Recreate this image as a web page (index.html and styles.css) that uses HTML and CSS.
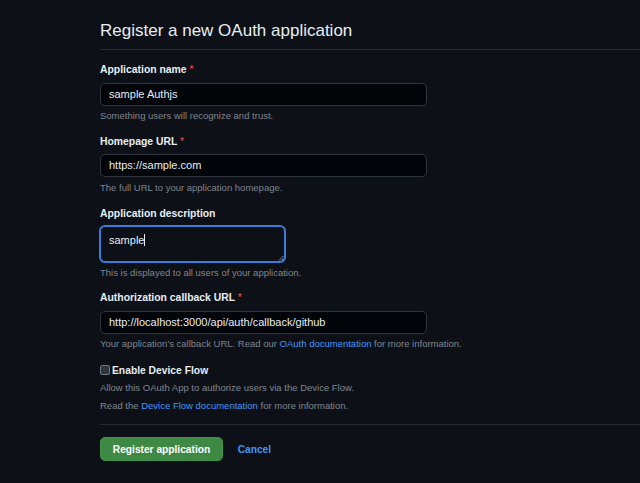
FILE: index.html
```html
<!DOCTYPE html>
<html lang="en">
<head>
<meta charset="utf-8">
<title>Register a new OAuth application</title>
<link rel="stylesheet" href="styles.css">
</head>
<body>
<main class="page">
  <h2 class="title">Register a new OAuth application</h2>
  <form class="form">
    <div class="group">
      <label class="label">Application name <span class="req">*</span></label>
      <div class="input">sample Authjs</div>
      <p class="hint">Something users will recognize and trust.</p>
    </div>
    <div class="group">
      <label class="label">Homepage URL <span class="req">*</span></label>
      <div class="input">https://sample.com</div>
      <p class="hint">The full URL to your application homepage.</p>
    </div>
    <div class="group">
      <label class="label">Application description</label>
      <div class="textarea"><span>sample</span><span class="caret"></span>
        <svg class="grip" width="6" height="6" viewBox="0 0 6 6"><path d="M5.5 1 L1 5.5 M5.5 3.5 L3.5 5.5" stroke="#8b949e" stroke-width="0.9" fill="none"/></svg>
      </div>
      <p class="hint">This is displayed to all users of your application.</p>
    </div>
    <div class="group">
      <label class="label">Authorization callback URL <span class="req">*</span></label>
      <div class="input">http://localhost:3000/api/auth/callback/github</div>
      <p class="hint">Your application’s callback URL. Read our <a class="link">OAuth documentation</a> for more information.</p>
    </div>
    <div class="device">
      <label class="check-row"><span class="checkbox"></span><span class="check-label">Enable Device Flow</span></label>
      <p class="hint">Allow this OAuth App to authorize users via the Device Flow.</p>
      <p class="hint">Read the <a class="link">Device Flow documentation</a> for more information.</p>
    </div>
    <div class="actions">
      <button type="button" class="btn">Register application</button>
      <a class="cancel">Cancel</a>
    </div>
  </form>
</main>
</body>
</html>
```
FILE: styles.css
```css
* { box-sizing: border-box; }
html, body { margin: 0; padding: 0; }
body {
  background: #0d1117;
  color: #e6edf3;
  font-family: "Liberation Sans", Arial, sans-serif;
  width: 640px;
  height: 483px;
  overflow: hidden;
}
.page {
  padding: 0 0 0 100px;
}
.title {
  margin: 0;
  padding: 18.8px 0 6.2px;
  height: 50px;
  font-size: 17px;
  font-weight: 400;
  line-height: 24px;
  color: #e6edf3;
  border-bottom: 1px solid #262c34;
}
.form {
  padding-top: 13.4px;
}
.group {
  width: 327px;
  margin-bottom: 12.7px;
}
.label {
  display: block;
  font-size: 10.4px;
  font-weight: 700;
  line-height: 14px;
  margin-bottom: 5.3px;
  color: #e6edf3;
}
.req { color: #f85149; font-weight: 400; }
.input {
  height: 23px;
  border: 1px solid #30363d;
  border-radius: 5px;
  background: #010409;
  font-size: 11px;
  line-height: 21px;
  padding: 0 8px;
  color: #e6edf3;
}
.textarea {
  position: relative;
  width: 185px;
  height: 36px;
  border: 1px solid #3b7ddd;
  box-shadow: 0 0 0 1px #3b7ddd;
  border-radius: 5px;
  background: #0d1117;
  font-size: 11px;
  line-height: 14px;
  padding: 6px 8px;
  color: #e6edf3;
}
.caret {
  display: inline-block;
  width: 1px;
  height: 12px;
  background: #e6edf3;
  vertical-align: -2px;
}
.grip {
  position: absolute;
  right: 0;
  bottom: 0;
}
.hint {
  margin: 4.7px 0 0;
  font-size: 9.5px;
  line-height: 12px;
  color: #7d8590;
  white-space: nowrap;
}
.link { color: #4493f8; }
.check-row {
  display: flex;
  align-items: center;
  gap: 2.5px;
  height: 14px;
  margin-bottom: 0.6px;
}
.checkbox {
  width: 10px;
  height: 10px;
  border: 1px solid #6e7681;
  border-radius: 2px;
  background: #30363d;
  margin-left: -0.5px;
}
.check-label {
  font-size: 10.3px;
  font-weight: 700;
  color: #e6edf3;
}
.device .hint { margin-top: 5.3px; }
.actions {
  margin-top: 12.7px;
  border-top: 1px solid #262c34;
  padding-top: 12px;
  display: flex;
  align-items: center;
  gap: 14.7px;
}
.btn {
  height: 23.3px;
  width: 123px;
  border: 1px solid #43924b;
  border-radius: 5px;
  background: #3e8a45;
  color: #ffffff;
  font-family: inherit;
  font-size: 10.2px;
  font-weight: 700;
  line-height: 21px;
  padding: 0;
}
.cancel {
  color: #4493f8;
  font-size: 10.2px;
  font-weight: 700;
}
```
